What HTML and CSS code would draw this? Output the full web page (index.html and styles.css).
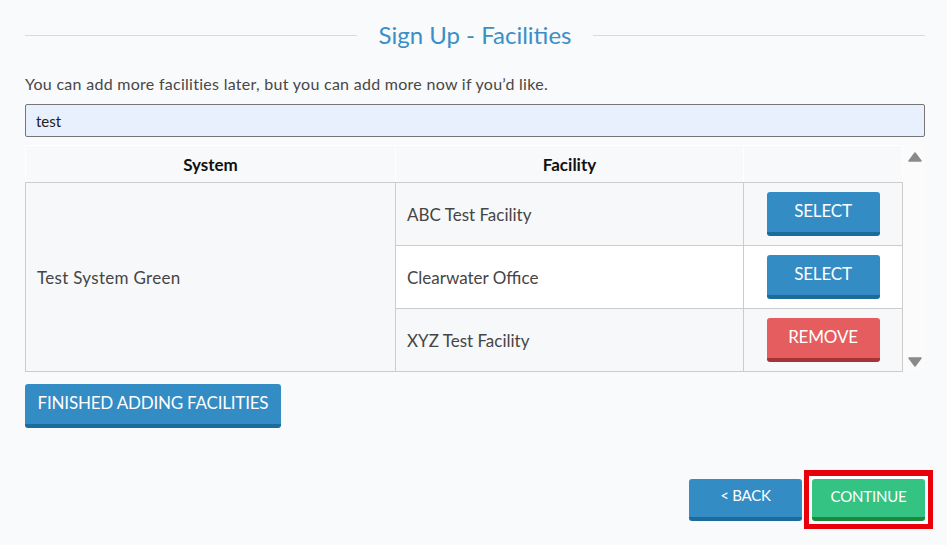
FILE: index.html
```html
<!DOCTYPE html>
<html lang="en">
<head>
<meta charset="utf-8">
<title>Sign Up - Facilities</title>
<link rel="stylesheet" href="styles.css">
</head>
<body>
<div class="page">
  <div class="title-row">
    <span class="rule"></span>
    <h1 class="title">Sign Up - Facilities</h1>
    <span class="rule"></span>
  </div>
  <p class="intro">You can add more facilities later, but you can add more now if you’d like.</p>
  <input class="search" type="text" value="test">
  <div class="table-box">
    <table class="fac-table">
      <colgroup>
        <col class="c-sys"><col class="c-fac"><col class="c-act">
      </colgroup>
      <thead>
        <tr><th>System</th><th>Facility</th><th></th></tr>
      </thead>
      <tbody>
        <tr class="odd">
          <td class="sys" rowspan="3">Test System Green</td>
          <td>ABC Test Facility</td>
          <td class="act"><button class="btn btn-blue btn-row">SELECT</button></td>
        </tr>
        <tr class="even">
          <td>Clearwater Office</td>
          <td class="act"><button class="btn btn-blue btn-row">SELECT</button></td>
        </tr>
        <tr class="odd">
          <td>XYZ Test Facility</td>
          <td class="act"><button class="btn btn-red btn-row">REMOVE</button></td>
        </tr>
      </tbody>
    </table>
    <div class="scrollbar">
      <svg class="arrow" width="14" height="10" viewBox="0 0 14 10"><path d="M7 1 L13 9 L1 9 Z" fill="#8a8a8a" stroke="#8a8a8a" stroke-width="1.5" stroke-linejoin="round"/></svg>
      <svg class="arrow" width="14" height="10" viewBox="0 0 14 10"><path d="M1 1 L13 1 L7 9 Z" fill="#8a8a8a" stroke="#8a8a8a" stroke-width="1.5" stroke-linejoin="round"/></svg>
    </div>
  </div>
  <button class="btn btn-blue btn-finish">FINISHED ADDING FACILITIES</button>
  <div class="nav-row">
    <button class="btn btn-blue btn-nav">&lt; BACK</button>
    <div class="highlight">
      <button class="btn btn-green btn-nav">CONTINUE</button>
    </div>
  </div>
</div>
</body>
</html>
```

FILE: styles.css
```css
* { box-sizing: border-box; }
html, body { margin: 0; padding: 0; }
body {
  background: #f9fafb;
  font-family: Lato, "Open Sans", "DejaVu Sans", sans-serif;
  color: #444;
  width: 947px;
  height: 545px;
  overflow: hidden;
}
.page {
  width: 900px;
  margin-left: 25px;
  padding-top: 20px;
}
.title-row {
  display: flex;
  align-items: center;
  gap: 22px;
  height: 30px;
}
.rule {
  flex: 1;
  height: 1px;
  background: #d9dadc;
}
.title {
  margin: 0;
  font-size: 24px;
  line-height: 30px;
  font-weight: 400;
  color: #3a8fc6;
}
.intro {
  margin: 24px 0 0;
  font-size: 16px;
  line-height: 20px;
  letter-spacing: 0.28px;
  color: #474747;
}
.search {
  display: block;
  width: 100%;
  height: 33px;
  margin-top: 10px;
  padding: 0 10px;
  background: #e8f0fe;
  border: 1px solid #767676;
  border-radius: 2px;
  font-family: Lato, "Open Sans", sans-serif;
  font-size: 15px;
  color: #222;
  outline: none;
}
.table-box {
  display: flex;
  margin-top: 8px;
  height: 227px;
}
.fac-table {
  width: 877px;
  border-collapse: collapse;
  table-layout: fixed;
  font-size: 17px;
}
.c-sys { width: 370px; }
.c-fac { width: 348px; }
.c-act { width: 159px; }
.fac-table th {
  height: 37px;
  border: 1px solid #fff;
  border-bottom-color: #cccccc;
  background: #f8f9fa;
  font-weight: 700;
  color: #111;
  text-align: center;
  padding: 0;
}
.fac-table td {
  height: 63px;
  border: 1px solid #cccccc;
  padding: 0 11px;
  text-align: left;
  vertical-align: middle;
  color: #454545;
}
.fac-table td.sys { background: #f7f8f9; letter-spacing: 0.3px; }
.fac-table tr.odd td { background: #f7f8f9; }
.fac-table tr.even td { background: #ffffff; }
.fac-table td.act { text-align: center; padding: 0; }
.scrollbar {
  width: 23px;
  background: #fbfbfc;
  display: flex;
  flex-direction: column;
  justify-content: space-between;
  align-items: center;
  padding: 7px 0 5px 2px;
}
.arrow { display: block; }
.btn {
  font-family: Lato, "Open Sans", sans-serif;
  font-size: 17px;
  color: #fff;
  border: none;
  border-radius: 3px;
  border-bottom: 4px solid;
  cursor: pointer;
  padding: 0;
  letter-spacing: -0.2px;
}
.btn-blue { background: #348cc4; border-bottom-color: #1d6b9c; }
.btn-red { background: #e55d5e; border-bottom-color: #a73435; }
.btn-green { background: #34c383; border-bottom-color: #1b8a3b; }
.btn-row {
  width: 113px;
  height: 44px;
  padding-bottom: 4px;
}
.btn-finish {
  display: block;
  margin-top: 12px;
  width: 256px;
  height: 44px;
  padding-bottom: 4px;
}
.nav-row {
  display: flex;
  justify-content: flex-end;
  align-items: center;
  gap: 2px;
  margin-top: 42px;
}
.btn-nav {
  width: 113px;
  height: 42px;
  font-size: 15px;
  padding-bottom: 5px;
}
.highlight {
  display: flex;
  border: 5px solid #e8000b;
  border-top-width: 6px;
  padding: 3px;
  background: #fff;
  margin-right: -8px;
}
```
